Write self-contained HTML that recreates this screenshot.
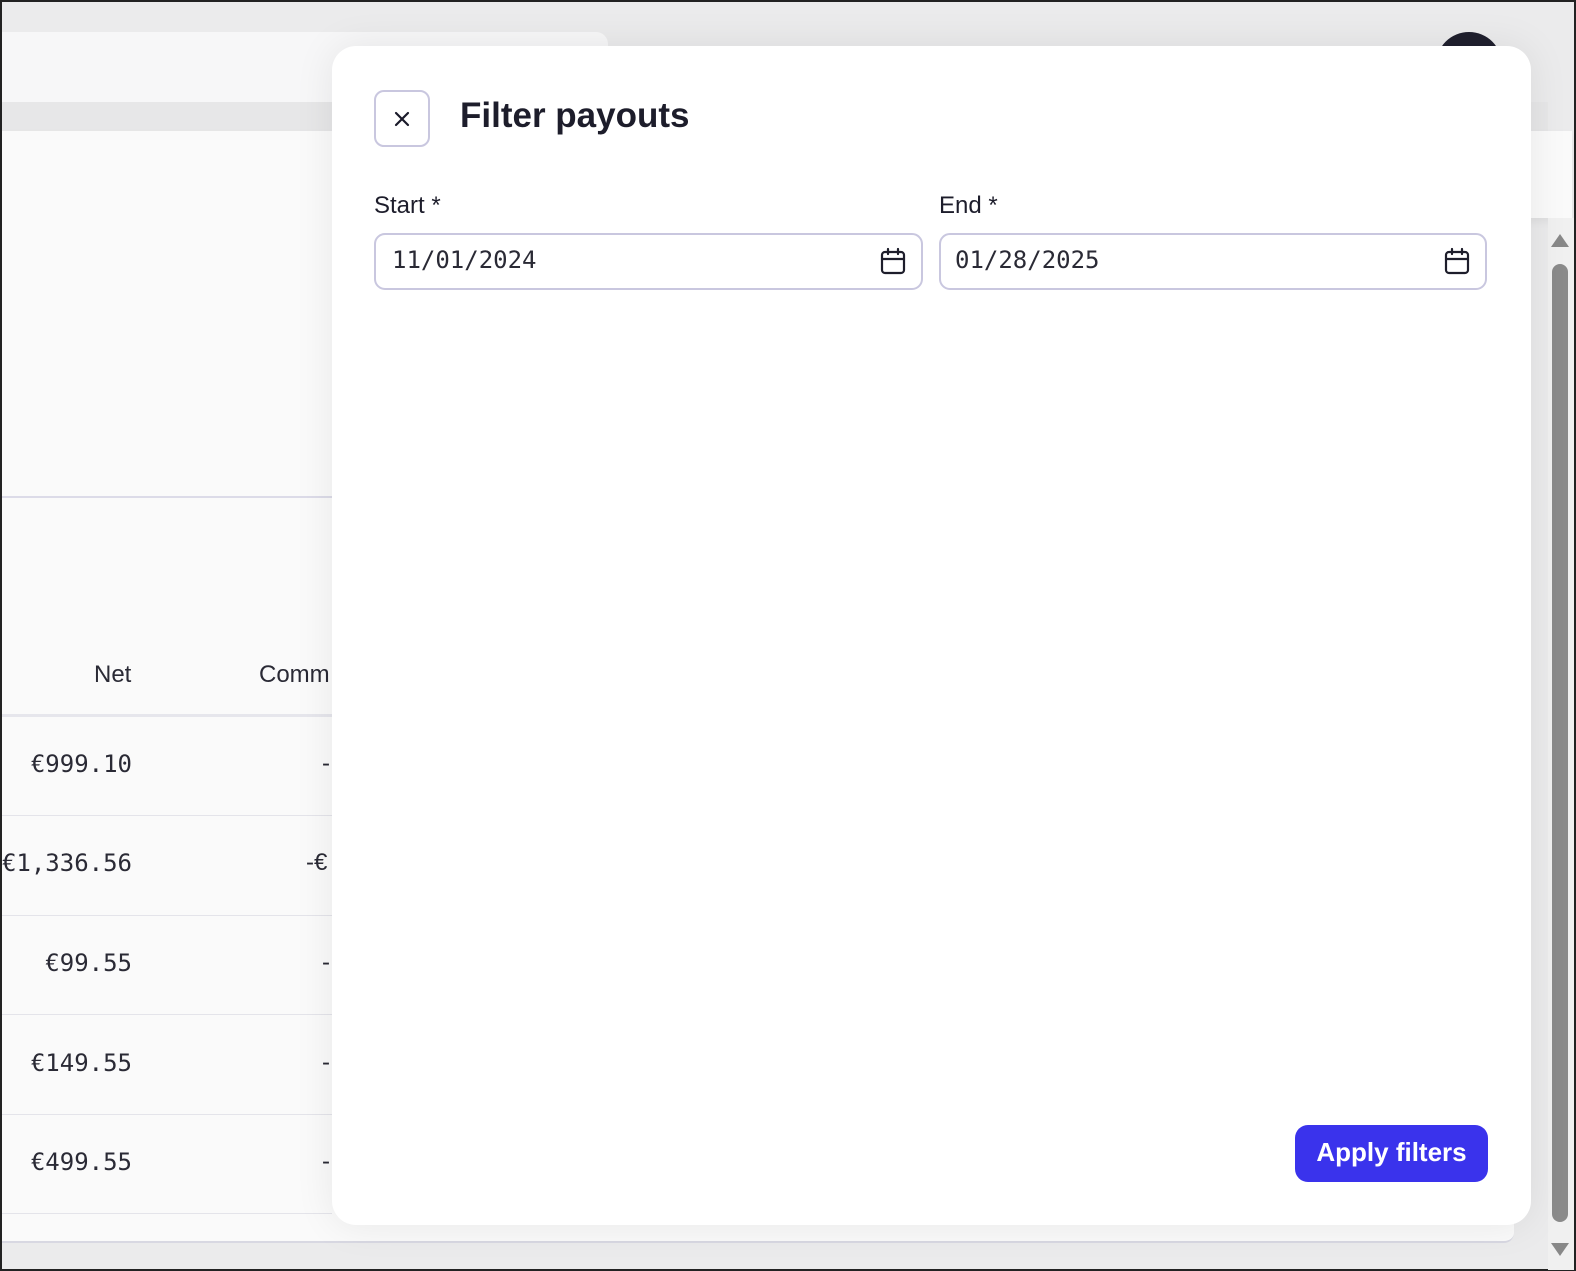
<!DOCTYPE html>
<html><head><style>
*{box-sizing:border-box;margin:0;padding:0}
body{width:1576px;height:1271px;overflow:hidden;background:#ebebec;font-family:"Liberation Sans",sans-serif;position:relative;border:2px solid #222}
.abs{position:absolute}
.mono{font-family:"DejaVu Sans Mono","Liberation Mono",monospace}
.row{position:absolute;left:0;width:330px;border-top:1px solid #e4e4ea;height:1px}
.amt{position:absolute;right:1442px;font-size:24px;color:#2a2a35}
.dash{position:absolute;left:320px;font-size:24px;color:#2a2a35}
</style></head><body>
<div class="abs" style="left:0;top:30px;width:606px;height:72px;background:#f7f7f8;border-radius:0 12px 0 0"></div>
<div class="abs" style="left:0;top:100px;width:1546px;height:29px;background:#e7e7e8"></div>
<div class="abs" style="left:0;top:129px;width:1570px;height:87px;background:#fafafa;box-shadow:0 4px 8px rgba(0,0,0,.05)"></div>
<div class="abs" style="left:1434px;top:30px;width:66px;height:66px;border-radius:50%;background:#1f1f2e"></div>
<div class="abs" style="left:1522px;top:158px;font-size:24px;color:#333">)</div>
<div class="abs" style="left:0;top:216px;width:1512px;height:1025px;background:#fafafa;border-bottom:2px solid #d8d8e2;border-radius:0 0 10px 0"></div>
<div class="abs" style="left:0;top:494px;width:330px;border-top:2px solid #dcdbe8"></div>
<div class="abs" style="left:92px;top:659px;font-size:24px;color:#2a2a35">Net</div>
<div class="abs" style="left:257px;top:659px;font-size:24px;color:#2a2a35">Comm</div>
<div class="abs" style="left:0;top:712px;width:330px;border-top:3px solid #e6e6ec"></div>
<div class="amt mono" style="top:748px">€999.10</div><div class="dash" style="top:748px">-</div>
<div class="row" style="top:813px"></div>
<div class="amt mono" style="top:847px">€1,336.56</div><div class="dash" style="top:847px;left:304px">-€</div>
<div class="row" style="top:913px"></div>
<div class="amt mono" style="top:947px">€99.55</div><div class="dash" style="top:947px">-</div>
<div class="row" style="top:1012px"></div>
<div class="amt mono" style="top:1047px">€149.55</div><div class="dash" style="top:1047px">-</div>
<div class="row" style="top:1112px"></div>
<div class="amt mono" style="top:1146px">€499.55</div><div class="dash" style="top:1146px">-</div>
<div class="row" style="top:1211px"></div>
<!-- scrollbar -->
<div class="abs" style="left:1546px;top:216px;width:26px;height:1052px;background:#f0f0f0"></div>
<div class="abs" style="left:1549px;top:232px;width:0;height:0;border-left:9px solid transparent;border-right:9px solid transparent;border-bottom:13px solid #888"></div>
<div class="abs" style="left:1550px;top:262px;width:16px;height:958px;background:#8a8a8a;border-radius:8px"></div>
<div class="abs" style="left:1549px;top:1241px;width:0;height:0;border-left:9px solid transparent;border-right:9px solid transparent;border-top:13px solid #888"></div>
<!-- modal -->
<div class="abs" style="left:330px;top:44px;width:1199px;height:1179px;background:#fff;border-radius:24px;box-shadow:0 0 40px rgba(0,0,0,.08)"></div>
<div class="abs" style="left:372px;top:88px;width:56px;height:57px;border:2px solid #c9c7df;border-radius:10px;background:#fff">
<svg width="52" height="53" viewBox="0 0 52 53"><path d="M20 21L32 33M32 21L20 33" stroke="#1a1a2a" stroke-width="2.2" stroke-linecap="round"/></svg></div>
<div class="abs" style="left:458px;top:94px;font-size:35px;font-weight:bold;color:#1d1d2b">Filter payouts</div>
<div class="abs" style="left:372px;top:190px;font-size:24px;color:#1d1d2b">Start *</div>
<div class="abs" style="left:937px;top:190px;font-size:24px;color:#1d1d2b">End *</div>
<div class="abs" style="left:372px;top:231px;width:549px;height:57px;border:2px solid #c9c7df;border-radius:11px"></div>
<div class="abs" style="left:937px;top:231px;width:548px;height:57px;border:2px solid #c9c7df;border-radius:11px"></div>
<div class="abs mono" style="left:390px;top:244px;font-size:24px;color:#2a2a35">11/01/2024</div>
<div class="abs mono" style="left:953px;top:244px;font-size:24px;color:#2a2a35">01/28/2025</div>
<svg class="abs" style="left:876px;top:244px" width="30" height="30" viewBox="0 0 30 30"><rect x="4" y="6" width="22" height="21" rx="3" fill="none" stroke="#1d1d2b" stroke-width="2.2"/><path d="M4 13H26M10 3V8M20 3V8" stroke="#1d1d2b" stroke-width="2.2" stroke-linecap="round"/></svg>
<svg class="abs" style="left:1440px;top:244px" width="30" height="30" viewBox="0 0 30 30"><rect x="4" y="6" width="22" height="21" rx="3" fill="none" stroke="#1d1d2b" stroke-width="2.2"/><path d="M4 13H26M10 3V8M20 3V8" stroke="#1d1d2b" stroke-width="2.2" stroke-linecap="round"/></svg>
<div class="abs" style="left:1293px;top:1123px;width:193px;height:57px;background:#3a33ec;border-radius:13px;color:#fff;font-size:26px;font-weight:bold;text-align:center;line-height:55px">Apply filters</div>
</body></html>
